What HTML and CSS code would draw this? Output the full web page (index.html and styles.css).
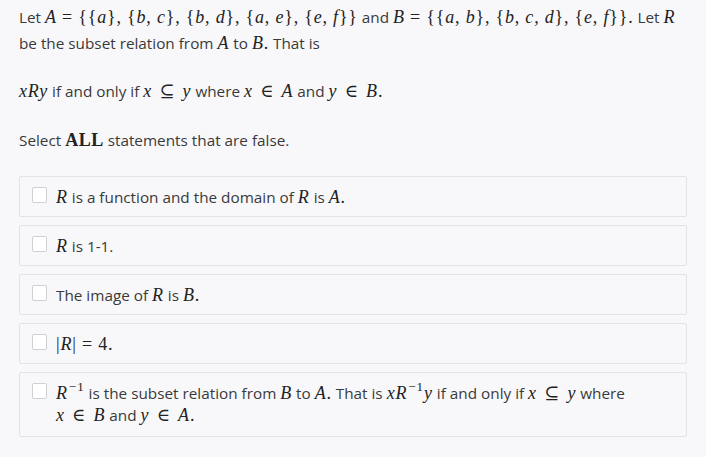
FILE: index.html
```html
<!DOCTYPE html>
<html>
<head>
<meta charset="utf-8">
<link rel="stylesheet" href="styles.css">
</head>
<body>
<div class="page">
  <p class="intro">Let <span class="m"><i>A</i> = {{<i>a</i>}, {<i>b</i>, <i>c</i>}, {<i>b</i>, <i>d</i>}, {<i>a</i>, <i>e</i>}, {<i>e</i>, <i>f</i>}}</span> and <span class="m"><i>B</i> = {{<i>a</i>, <i>b</i>}, {<i>b</i>, <i>c</i>, <i>d</i>}, {<i>e</i>, <i>f</i>}}.</span> Let <span class="m"><i>R</i></span><br>be the subset relation from <span class="m"><i>A</i></span> to <span class="m"><i>B</i>.</span> That is</p>
  <p class="rel"><span class="m"><i>xRy</i></span> if and only if <span class="m"><i>x</i> <span class="op">⊆</span> <i>y</i></span> where <span class="m"><i>x</i> <span class="op">∈</span> <i>A</i></span> and <span class="m"><i>y</i> <span class="op">∈</span> <i>B</i>.</span></p>
  <p class="select">Select <b class="mb">ALL</b> statements that are false.</p>
  <ul class="options">
    <li class="option"><span class="check"></span><span class="label"><span class="m"><i>R</i></span> is a function and the domain of <span class="m"><i>R</i></span> is <span class="m"><i>A</i>.</span></span></li>
    <li class="option"><span class="check"></span><span class="label"><span class="m"><i>R</i></span> is 1-1.</span></li>
    <li class="option"><span class="check"></span><span class="label">The image of <span class="m"><i>R</i></span> is <span class="m"><i>B</i>.</span></span></li>
    <li class="option"><span class="check"></span><span class="label"><span class="m">|<i>R</i>| = 4.</span></span></li>
    <li class="option"><span class="check"></span><span class="label"><span class="m"><i>R</i><sup>−1</sup></span> is the subset relation from <span class="m"><i>B</i></span> to <span class="m"><i>A</i>.</span> That is <span class="m"><i>xR</i><sup>−1</sup><i>y</i></span> if and only if <span class="m"><i>x</i> <span class="op">⊆</span> <i>y</i></span> where<br><span class="m"><i>x</i> <span class="op">∈</span> <i>B</i></span> and <span class="m"><i>y</i> <span class="op">∈</span> <i>A</i>.</span></span></li>
  </ul>
</div>
</body>
</html>
```
FILE: styles.css
```css
html, body {
  margin: 0;
  padding: 0;
  background: #f8f8fa;
}
body {
  font-family: "Open Sans", "Lato", sans-serif;
  font-size: 15.3px;
  color: #3a3a3a;
}
.page {
  padding: 4px 19px 0 19px;
}
p {
  margin: 0;
  line-height: 26px;
}
.rel {
  margin-top: 22px;
}
.select {
  margin-top: 23px;
}
.m {
  font-family: "Liberation Serif", "DejaVu Serif", serif;
  font-size: 18px;
  letter-spacing: 0.8px;
  color: #222;
}
.m i {
  font-style: italic;
}
.op {
  margin: 0 2px;
}
.mb {
  font-family: "Liberation Serif", "DejaVu Serif", serif;
  font-size: 18px;
  font-weight: bold;
  letter-spacing: 0.5px;
  color: #222;
}
sup {
  font-size: 13px;
  line-height: 0;
  vertical-align: 8px;
  margin-left: 1px;
  letter-spacing: 1px;
}
.options {
  list-style: none;
  margin: 23px 0 0 0;
  padding: 0;
  display: flex;
  flex-direction: column;
  gap: 8px;
}
.option {
  display: flex;
  align-items: flex-start;
  gap: 9px;
  border: 1px solid #e2e2e8;
  border-radius: 2px;
  padding: 9px 12px 8px 12px;
  line-height: 22px;
}
.option:last-child {
  padding-bottom: 10px;
}
.check {
  flex: none;
  width: 13px;
  height: 14px;
  margin-top: 1px;
  border: 1px solid #cfcfd4;
  border-radius: 2px;
  background: #fff;
}
.label {
  flex: 1;
}
```
